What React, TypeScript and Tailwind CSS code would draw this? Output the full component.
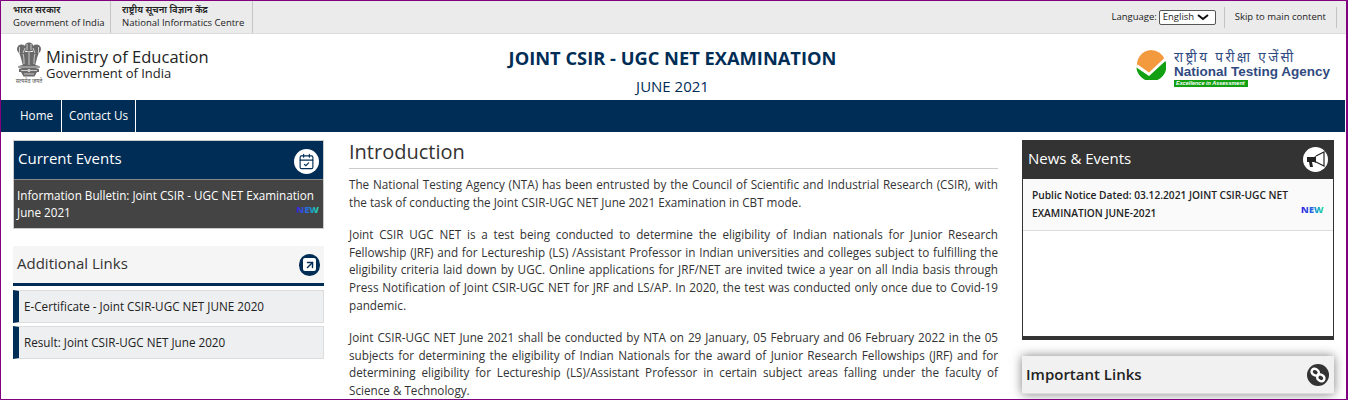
import { CalendarCheck, ArrowUpRight } from 'lucide-react';

const NewBadge = ({ className }: { className: string }) => (
  <span
    className={`absolute bg-gradient-to-r from-[#3a10e0] via-[#2a70e0] to-[#30e0a0] bg-clip-text text-[9.5px] leading-[9px] font-extrabold text-transparent ${className}`}
  >
    NEW
  </span>
);

const Emblem = () => (
  <div className="flex w-[32px] shrink-0 flex-col items-center">
    <svg width="26" height="35" viewBox="0 0 26 35">
      <g fill="#6a6a6a">
        <circle cx="13" cy="5" r="4.5" />
        <circle cx="5.5" cy="7" r="4.5" />
        <circle cx="20.5" cy="7" r="4.5" />
        <path d="M3 10h20l-2 6-2 8H7l-2-8z" />
        <ellipse cx="13" cy="25" rx="11" ry="2.6" />
        <path d="M3 27h20v3H3z" />
        <path d="M5 30h16l-2.5 4.5h-11z" />
      </g>
      <g fill="none" stroke="#d8d8d8" strokeWidth="0.9">
        <path d="M11 2v6M15 2v6M9 6l-2 5M17 6l2 5M3.5 5v6M22.5 5v6" />
        <path d="M7 12c1 3 1 6 1 10M13 10v13M19 12c-1 3-1 6-1 10" />
        <path d="M3 25h20M5 28.5h16" />
        <circle cx="13" cy="28.5" r="1.2" />
        <path d="M8 32h10" />
      </g>
    </svg>
    <span className="mt-[1px] font-['Noto_Sans','Noto_Sans_Devanagari',sans-serif] text-[5.5px] leading-[7px] whitespace-nowrap text-[#555]">
      सत्यमेव जयते
    </span>
  </div>
);

const NtaMark = () => (
  <svg width="30" height="30" viewBox="0 0 30 30" className="shrink-0">
    <path d="M15 0a15 15 0 0 1 14 10L13 25 1 17A15 15 0 0 1 15 0z" fill="#f39a3e" />
    <path d="M0.4 17.5 13 26 29.4 11A15 15 0 1 1 0.4 17.5z" fill="#12a012" />
    <path d="M1 15.5 13 24 29 9" fill="none" stroke="#fff" strokeWidth="2.2" />
  </svg>
);

const Megaphone = () => (
  <svg width="20" height="18" viewBox="0 0 20 18">
    <path d="M1 6h7l2-1v7l-2-1H6l1 5H4l-1-5H1z" fill="#222" />
    <path d="M10 5l8-4v14l-8-4" fill="none" stroke="#222" strokeWidth="1.2" />
  </svg>
);

const ChainLink = () => (
  <svg width="16" height="16" viewBox="0 0 16 16" fill="none" stroke="#fff" strokeWidth="2.4">
    <rect x="1.5" y="2" width="7.5" height="6" rx="3" transform="rotate(35 5 5)" />
    <rect x="7" y="8" width="7.5" height="6" rx="3" transform="rotate(35 11 11)" />
  </svg>
);

const paragraphs = [
  'The National Testing Agency (NTA) has been entrusted by the Council of Scientific and Industrial Research (CSIR), with the task of conducting the Joint CSIR-UGC NET June 2021 Examination in CBT mode.',
  'Joint CSIR UGC NET is a test being conducted to determine the eligibility of Indian nationals for Junior Research Fellowship (JRF) and for Lectureship (LS) /Assistant Professor in Indian universities and colleges subject to fulfilling the eligibility criteria laid down by UGC. Online applications for JRF/NET are invited twice a year on all India basis through Press Notification of Joint CSIR-UGC NET for JRF and LS/AP. In 2020, the test was conducted only once due to Covid-19 pandemic.',
  'Joint CSIR-UGC NET June 2021 shall be conducted by NTA on 29 January, 05 February and 06 February 2022 in the 05 subjects for determining the eligibility of Indian Nationals for the award of Junior Research Fellowships (JRF) and for determining eligibility for Lectureship (LS)/Assistant Professor in certain subject areas falling under the faculty of Science & Technology.',
];

const links = ['E-Certificate - Joint CSIR-UGC NET JUNE 2020', 'Result: Joint CSIR-UGC NET June 2020'];

export default function App() {
  return (
    <div className="h-[400px] w-[1348px] overflow-hidden border border-r-2 border-[#800080] bg-white font-['Open_Sans',sans-serif] text-[#222]">
      {/* top strip */}
      <div className="flex h-[33px] items-stretch justify-between border-b border-[#ddd] bg-[#ebebeb]">
        <div className="flex pl-[2px]">
          <div className="w-[108px] border-r border-[#c4c4c4] pl-[10px] pt-[2px] text-[9.5px] leading-[12px] text-[#222]">
            <div className="font-['Noto_Sans','Noto_Sans_Devanagari',sans-serif] leading-[14px] font-semibold">भारत सरकार</div>
            <div>Government of India</div>
          </div>
          <div className="w-[142px] border-r border-[#c4c4c4] pl-[11px] pt-[2px] text-[9.5px] leading-[12px]">
            <div className="font-['Noto_Sans','Noto_Sans_Devanagari',sans-serif] leading-[14px] font-semibold">राष्ट्रीय सूचना विज्ञान केंद्र</div>
            <div>National Informatics Centre</div>
          </div>
        </div>
        <div className="flex items-center pr-[9px] text-[9.5px]">
          <span>Language:</span>
          <span className="ml-[2px] flex h-[15px] w-[57px] items-center justify-between rounded-[2px] border border-[#555] bg-white pl-[3px] pr-[6px] text-[9.5px] text-[#222]">
            English
            <svg width="12" height="7" viewBox="0 0 12 7">
              <path d="M1 1l5 4 5-4" fill="none" stroke="#111" strokeWidth="2" />
            </svg>
          </span>
          <span className="ml-[8px] flex h-[21px] items-center border-x border-[#c4c4c4] px-[10px]">Skip to main content</span>
        </div>
      </div>

      {/* brand header */}
      <div className="flex h-[66px] items-start pl-[12px] pr-[14px]">
        <div className="flex flex-1 items-start pt-[8px]">
          <Emblem />
          <div className="ml-[1px] pt-[5px]">
            <div className="text-[16.5px] leading-[19px] font-medium whitespace-nowrap text-[#222]">Ministry of Education</div>
            <div className="text-[13px] leading-[14px] whitespace-nowrap text-[#222]">Government of India</div>
          </div>
        </div>
        <div className="text-center text-[#002d56]">
          <div className="pt-[11px] text-[18.3px] leading-[26px] font-bold whitespace-nowrap">JOINT CSIR - UGC NET EXAMINATION</div>
          <div className="pt-[5px] text-[15px] leading-[20px] font-medium">JUNE 2021</div>
        </div>
        <div className="flex flex-1 justify-end">
          <div className="flex w-[196px] items-start gap-[8px] pt-[16px]">
            <NtaMark />
            <div>
              <div className="font-['Noto_Sans','Noto_Sans_Devanagari',sans-serif] text-[13.5px] leading-[14px] tracking-[2.4px] whitespace-nowrap text-[#2f4a80]">
                राष्ट्रीय परीक्षा एजेंसी
              </div>
              <div className="font-['Liberation_Sans',sans-serif] text-[13.5px] leading-[15px] font-bold whitespace-nowrap text-[#2f4a80]">
                National Testing Agency
              </div>
              <div className="mt-[1px] h-[7px] w-[74px] overflow-hidden bg-[#12a012] pl-[2px] font-['Liberation_Sans',sans-serif] text-[5.5px] leading-[7px] font-bold whitespace-nowrap text-white italic">
                Excellence in Assessment
              </div>
            </div>
          </div>
        </div>
      </div>

      {/* nav */}
      <div className="mr-[1px] flex h-[32px] bg-[#002d56] pl-[9px] text-[11.7px] text-white">
        <div className="flex items-center border-r border-white pl-[10px] pr-[8px]">Home</div>
        <div className="flex items-center border-r border-white px-[7px]">Contact Us</div>
      </div>

      {/* body */}
      <div className="flex pt-[8px] pl-[12px]">
        <div className="w-[311px] shrink-0">
          <div className="border border-[#ccc]">
            <div className="flex h-[38px] items-center justify-between bg-[#002d56] pb-[3px] pl-[4px] pr-[4px] text-white">
              <span className="text-[15px]">Current Events</span>
              <span className="mt-[5px] flex h-[25px] w-[25px] items-center justify-center rounded-full bg-white">
                <CalendarCheck size={17} strokeWidth={1.6} className="text-[#002d56]" />
              </span>
            </div>
            <div className="relative h-[49px] border-t border-[#888] bg-[#444] px-[3px] pt-[7px] text-[11.7px] leading-[17px] text-white">
              Information Bulletin: Joint CSIR - UGC NET Examination June 2021
              <NewBadge className="right-[4px] bottom-[14px]" />
            </div>
          </div>

          <div className="mt-[17px] flex h-[40px] items-center justify-between border-b-[3px] border-[#002d56] bg-[#f5f5f5] pb-[3px] pl-[4px] pr-[4px]">
            <span className="text-[15px] text-[#333]">Additional Links</span>
            <span className="mt-[3px] flex h-[22px] w-[21px] items-center justify-center rounded-full bg-[#002d56]">
              <span className="flex h-[13px] w-[13px] items-center justify-center rounded-[2px] bg-white">
                <ArrowUpRight size={12} strokeWidth={3} className="text-[#002d56]" />
              </span>
            </span>
          </div>
          <div className="mt-[4px] flex flex-col gap-[3px]">
            {links.map((link) => (
              <div
                key={link}
                className="flex h-[33px] items-center border border-l-[6px] border-[#ddd] border-l-[#002d56] bg-[#eeeff1] pl-[5px] text-[11.7px] text-[#222]"
              >
                {link}
              </div>
            ))}
          </div>
        </div>

        <div className="ml-[25px] w-[649px] shrink-0">
          <h1 className="h-[29px] border-b border-[#ccc] text-[20px] leading-[24px] text-[#333]">Introduction</h1>
          <div className="mt-[7px] flex flex-col gap-[15px] text-justify text-[11.7px] leading-[17.6px] text-[#333]">
            {paragraphs.map((p) => (
              <p key={p}>{p}</p>
            ))}
          </div>
        </div>

        <div className="ml-[24px] w-[312px] shrink-0">
          <div className="flex h-[200px] flex-col border-x border-b-4 border-[#333]">
            <div className="flex h-[39px] shrink-0 items-center justify-between bg-[#333] pb-[2px] pl-[5px] pr-[5px] text-white">
              <span className="text-[15px]">News &amp; Events</span>
              <span className="mt-[2px] flex h-[25px] w-[25px] items-center justify-center rounded-full bg-white">
                <Megaphone />
              </span>
            </div>
            <div className="relative h-[52px] border-b border-[#ddd] bg-[#fafafa] px-[9px] pt-[7px] text-[10.2px] leading-[18px] font-semibold text-[#222]">
              Public Notice Dated: 03.12.2021 JOINT CSIR-UGC NET EXAMINATION JUNE-2021
              <NewBadge className="right-[9px] bottom-[16px]" />
            </div>
          </div>
          <div className="mt-[16px] flex h-[38px] items-center justify-between border-b border-[#ddd] bg-[#f1f1f1] pl-[4px] pr-[5px] shadow-[0_0_10px_rgba(0,0,0,0.5)]">
            <span className="text-[15px] font-semibold text-[#222]">Important Links</span>
            <span className="flex h-[22px] w-[22px] items-center justify-center rounded-full bg-[#333]">
              <ChainLink />
            </span>
          </div>
        </div>
      </div>
    </div>
  );
}
